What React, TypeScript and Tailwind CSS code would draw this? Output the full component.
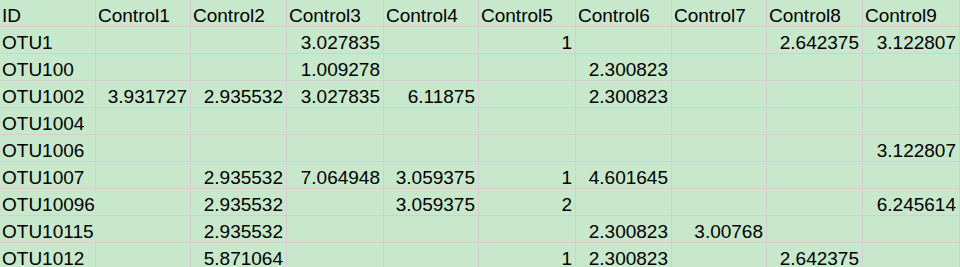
import React from 'react';

const headers = [
  'ID',
  'Control1',
  'Control2',
  'Control3',
  'Control4',
  'Control5',
  'Control6',
  'Control7',
  'Control8',
  'Control9',
];

// one entry per row: id, then the nine control values ('' = empty cell)
const rows: { id: string; values: string[]; spill?: boolean }[] = [
  { id: 'OTU1', values: ['', '', '3.027835', '', '1', '', '', '2.642375', '3.122807'] },
  { id: 'OTU100', values: ['', '', '1.009278', '', '', '2.300823', '', '', ''] },
  {
    id: 'OTU1002',
    values: ['3.931727', '2.935532', '3.027835', '6.11875', '', '2.300823', '', '', ''],
  },
  { id: 'OTU1004', values: ['', '', '', '', '', '', '', '', ''] },
  { id: 'OTU1006', values: ['', '', '', '', '', '', '', '', '3.122807'] },
  {
    id: 'OTU1007',
    values: ['', '2.935532', '7.064948', '3.059375', '1', '4.601645', '', '', ''],
  },
  {
    id: 'OTU10096',
    values: ['', '2.935532', '', '3.059375', '2', '', '', '', '6.245614'],
    spill: true,
  },
  {
    id: 'OTU10115',
    values: ['', '2.935532', '', '', '', '2.300823', '3.00768', '', ''],
    spill: true,
  },
  {
    id: 'OTU1012',
    values: ['', '5.871064', '', '', '1', '2.300823', '', '2.642375', ''],
  },
];

const gridCols =
  'grid grid-cols-[96px_95px_96px_97px_95px_97px_96px_95px_96px_97px]';

const cellBase =
  'h-[27px] flex items-end border-b border-r border-[#d9cbd3] leading-[21px] whitespace-nowrap';

export default function App() {
  return (
    <div
      className="w-[960px] h-[267px] overflow-hidden bg-[#c8e8cc] text-[19px] text-black"
      style={{ fontFamily: '"Liberation Sans", Arial, sans-serif' }}
    >
      <div className={gridCols}>
        {headers.map((h) => (
          <div key={h} className={`${cellBase} pl-[2px]`}>
            {h}
          </div>
        ))}
        {rows.map((row) => (
          <React.Fragment key={row.id}>
            <div
              className={`${cellBase} pl-[2px] overflow-visible relative z-10 ${
                row.spill ? 'border-r-transparent' : ''
              }`}
            >
              {row.id}
            </div>
            {row.values.map((v, i) => (
              <div key={i} className={`${cellBase} justify-end pr-[3px]`}>
                {v}
              </div>
            ))}
          </React.Fragment>
        ))}
      </div>
    </div>
  );
}
